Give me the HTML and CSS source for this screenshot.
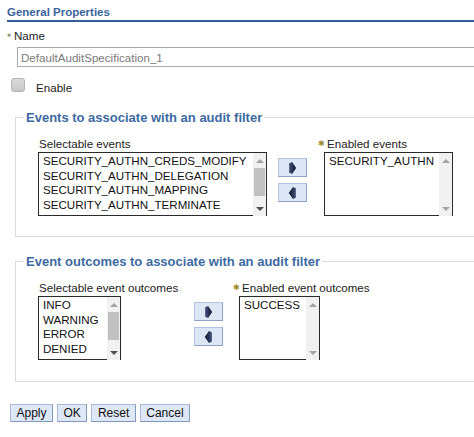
FILE: index.html
```html
<!DOCTYPE html>
<html>
<head>
<meta charset="utf-8">
<link rel="stylesheet" href="styles.css">
</head>
<body>
<div class="page">
  <h2 class="section-title">General Properties</h2>
  <div class="field-label"><span class="req-small">✱</span>Name</div>
  <input class="text-input" type="text" value="DefaultAuditSpecification_1">
  <div class="check-row"><span class="checkbox"></span><span>Enable</span></div>

  <fieldset class="group group-events">
    <legend>Events to associate with an audit filter</legend>
    <div class="group-body">
      <div class="col-left">
        <div class="list-label">Selectable events</div>
        <div class="listbox">
          <div class="lb-items">
            <div>SECURITY_AUTHN_CREDS_MODIFY</div>
            <div>SECURITY_AUTHN_DELEGATION</div>
            <div>SECURITY_AUTHN_MAPPING</div>
            <div>SECURITY_AUTHN_TERMINATE</div>
          </div>
          <div class="lb-scroll">
            <span class="sb-btn"><span class="tri up dim"></span></span>
            <span class="thumb"></span>
            <span class="sb-fill"></span>
            <span class="sb-btn"><span class="tri down"></span></span>
          </div>
        </div>
      </div>
      <div class="col-buttons">
        <span class="move-btn"><svg width="9" height="12" viewBox="0 0 9 12"><path d="M1.5 1.2 L4.2 0.3 L8.3 6 L4.2 11.7 L1.5 10.8 Z" fill="#1e2b48"/><path d="M1.5 1.2 L4.2 0.3 L4.2 11.7 L1.5 10.8 Z" fill="#34426a"/></svg></span>
        <span class="move-btn"><svg width="9" height="12" viewBox="0 0 9 12"><path d="M7.5 1.2 L4.8 0.3 L0.7 6 L4.8 11.7 L7.5 10.8 Z" fill="#1e2b48"/><path d="M7.5 1.2 L4.8 0.3 L4.8 11.7 L7.5 10.8 Z" fill="#34426a"/></svg></span>
      </div>
      <div class="col-right">
        <div class="list-label req-label"><span class="req">✱</span>Enabled events</div>
        <div class="listbox">
          <div class="lb-items">
            <div>SECURITY_AUTHN</div>
          </div>
          <div class="lb-scroll">
            <span class="sb-btn"><span class="tri up dim"></span></span>
            <span class="sb-fill"></span>
            <span class="sb-btn"><span class="tri down dim"></span></span>
          </div>
        </div>
      </div>
    </div>
  </fieldset>

  <fieldset class="group group-outcomes">
    <legend>Event outcomes to associate with an audit filter</legend>
    <div class="group-body">
      <div class="col-left">
        <div class="list-label">Selectable event outcomes</div>
        <div class="listbox">
          <div class="lb-items">
            <div>INFO</div>
            <div>WARNING</div>
            <div>ERROR</div>
            <div>DENIED</div>
          </div>
          <div class="lb-scroll">
            <span class="sb-btn"><span class="tri up dim"></span></span>
            <span class="thumb"></span>
            <span class="sb-fill"></span>
            <span class="sb-btn"><span class="tri down"></span></span>
          </div>
        </div>
      </div>
      <div class="col-buttons">
        <span class="move-btn"><svg width="9" height="12" viewBox="0 0 9 12"><path d="M1.5 1.2 L4.2 0.3 L8.3 6 L4.2 11.7 L1.5 10.8 Z" fill="#1e2b48"/><path d="M1.5 1.2 L4.2 0.3 L4.2 11.7 L1.5 10.8 Z" fill="#34426a"/></svg></span>
        <span class="move-btn"><svg width="9" height="12" viewBox="0 0 9 12"><path d="M7.5 1.2 L4.8 0.3 L0.7 6 L4.8 11.7 L7.5 10.8 Z" fill="#1e2b48"/><path d="M7.5 1.2 L4.8 0.3 L4.8 11.7 L7.5 10.8 Z" fill="#34426a"/></svg></span>
      </div>
      <div class="col-right">
        <div class="list-label req-label"><span class="req">✱</span>Enabled event outcomes</div>
        <div class="listbox">
          <div class="lb-items">
            <div>SUCCESS</div>
          </div>
          <div class="lb-scroll">
            <span class="sb-btn"><span class="tri up dim"></span></span>
            <span class="sb-fill"></span>
            <span class="sb-btn"><span class="tri down dim"></span></span>
          </div>
        </div>
      </div>
    </div>
  </fieldset>

  <div class="actions">
    <button class="btn">Apply</button>
    <button class="btn">OK</button>
    <button class="btn">Reset</button>
    <button class="btn">Cancel</button>
  </div>
</div>
</body>
</html>
```

FILE: styles.css
```css
* { box-sizing: border-box; }

body {
  margin: 0;
  overflow: hidden;
  background: #fff;
  color: #222;
  font-family: "Liberation Sans", Arial, sans-serif;
}

.page {
  padding-left: 7px;
}

.section-title {
  margin: 5px 0 0;
  padding-bottom: 1px;
  font-size: 11.5px;
  line-height: 14px;
  font-weight: bold;
  color: #3b659c;
  border-bottom: 2px solid #2f5e99;
}

.field-label {
  display: flex;
  align-items: center;
  margin-top: 6px;
  font-size: 11.6px;
  line-height: 15px;
}

.req-small {
  width: 7px;
  font-size: 5px;
  color: #8a8a70;
}

.text-input {
  display: block;
  margin: 4px 0 0 10px;
  width: 480px;
  height: 20px;
  padding: 0 3px;
  border: 1px solid #a9a9a9;
  border-radius: 0;
  outline: none;
  font-family: "Liberation Sans", Arial, sans-serif;
  font-size: 11.6px;
  line-height: 18px;
  color: #7a7a7a;
  background: #fff;
}

.check-row {
  display: flex;
  margin: 13px 0 0 4px;
  font-size: 11.6px;
  line-height: 15px;
}

.checkbox {
  width: 14px;
  height: 14px;
  margin: -2px 11px 0 0;
  border: 1px solid #b4b4b4;
  border-radius: 3px;
  background: linear-gradient(#dadada, #c8c8c8);
}

.group {
  margin: 15px -20px 0 8px;
  padding: 0;
  min-width: 0;
  border: 1px solid #dcdcdc;
}

.group-outcomes {
  margin-top: 17px;
}

.group legend {
  margin-left: 8px;
  padding: 0 2px;
  font-size: 13px;
  line-height: 15px;
  font-weight: bold;
  color: #3d6aa2;
}

.group-body {
  display: flex;
  padding: 11px 0 20px 22px;
}

.group-outcomes .group-body {
  padding-bottom: 21px;
}

.list-label {
  margin: 0 0 1px 1px;
  font-size: 11.6px;
  line-height: 15px;
  color: #222;
  white-space: nowrap;
}

.req-label {
  display: flex;
  margin-left: -6px;
}

.req {
  width: 9px;
  font-size: 8px;
  color: #9c8a2e;
}

.col-buttons {
  display: flex;
  flex-direction: column;
  gap: 6px;
  margin-left: 11px;
  padding-top: 22px;
}

.group-events .col-left { width: 229px; }
.group-events .col-right { margin-left: 17px; }
.group-events .col-right .listbox { width: 129px; }

.group-outcomes .col-left { width: 145px; }
.group-outcomes .col-left .listbox { width: 83px; }
.group-outcomes .col-right { margin-left: 16px; }
.group-outcomes .col-right .listbox { width: 81px; }

.listbox {
  display: flex;
  height: 64px;
  border: 1px solid #2a2a2a;
  border-bottom: 0;
  background: #fff;
  font-size: 11.6px;
  line-height: 14.5px;
  color: #111;
}

.lb-items {
  flex: 1;
  min-width: 0;
  padding: 1px 0 0 4px;
  border-bottom: 1px solid #2a2a2a;
  overflow: hidden;
  white-space: nowrap;
}

.lb-scroll {
  display: flex;
  flex-direction: column;
  width: 13px;
  background: #f1f1f1;
}

.sb-btn {
  display: flex;
  align-items: center;
  justify-content: center;
  height: 15px;
}

.sb-fill { flex: 1; }

.thumb {
  height: 28px;
  margin: 0 1px;
  background: #c1c1c1;
}

.tri {
  width: 0;
  height: 0;
  border-left: 4px solid transparent;
  border-right: 4px solid transparent;
}

.tri.up { border-bottom: 4px solid #505050; }
.tri.down { border-top: 4px solid #505050; }
.tri.up.dim { border-bottom-color: #a3a3a3; }
.tri.down.dim { border-top-color: #a3a3a3; }

.move-btn {
  display: flex;
  align-items: center;
  justify-content: center;
  width: 29px;
  height: 19px;
  border: 1px solid;
  border-color: #b3c4de #8ea3c4 #8ea3c4 #b3c4de;
  background: #dce6f5;
}

.actions {
  display: flex;
  gap: 4px;
  margin: 22px 0 0 3px;
}

.btn {
  height: 18px;
  margin: 0;
  padding: 0 5.5px;
  border: 1px solid;
  border-color: #a9bbd6 #8399bc #8399bc #a9bbd6;
  border-radius: 0;
  background: #dde7f5;
  color: #111;
  font-family: "Liberation Sans", Arial, sans-serif;
  font-size: 12px;
  line-height: 16px;
}
```
